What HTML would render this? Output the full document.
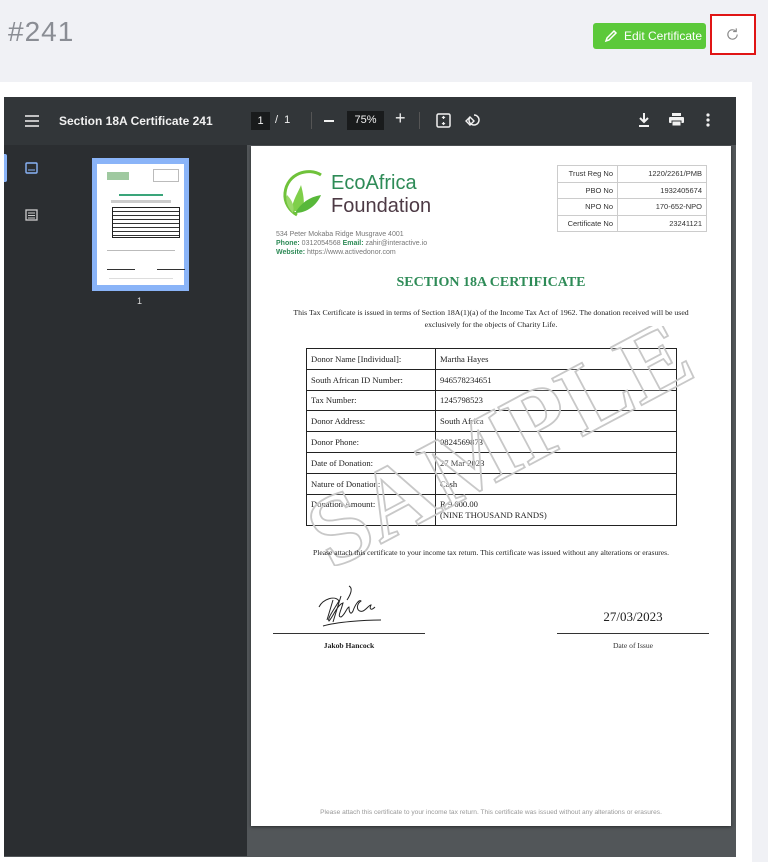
<!DOCTYPE html>
<html><head><meta charset="utf-8">
<style>
*{margin:0;padding:0;box-sizing:border-box}
body{width:768px;height:856px;overflow:hidden;background:#f0f1f5;font-family:"Liberation Sans",sans-serif;position:relative}
.abs{position:absolute}
.title{left:8px;top:16px;font-size:28px;color:#8a8d94;font-family:"Liberation Sans Narrow","Liberation Sans",sans-serif;letter-spacing:1px}
.btn{left:593px;top:23px;width:113px;height:26px;background:#5cc93a;border-radius:3px;color:#fff;font-size:12px;line-height:26px;padding-left:31px;font-family:"Liberation Sans Narrow","Liberation Sans",sans-serif}
.ref{left:710px;top:14px;width:46px;height:41px;border:2px solid #e01515;background:#fff}
.card{left:0;top:82px;width:752px;height:780px;background:#fff}
.viewer{left:4px;top:97px;width:732px;height:760px;background:#525659}
.tb{left:4px;top:97px;width:732px;height:48px;background:#323639;color:#f1f1f1}
.side{left:4px;top:145px;width:243px;height:711px;background:#2b2e31}
.page{left:251px;top:146px;width:480px;height:680px;background:#fff;box-shadow:0 1px 3px rgba(0,0,0,.5)}
.serif{font-family:"Liberation Serif",serif}
table{border-collapse:collapse}
.dt td{border:1px solid #222;font-size:8.6px;padding:0 4px;height:20.8px;vertical-align:middle;color:#222;font-family:"Liberation Serif",serif}
.it td{border:1px solid #ccc;font-size:7.5px;height:16.5px;padding:0 4px;color:#333;text-align:right}
</style></head><body>
<div class="abs title">#241</div>
<div class="abs btn">Edit Certificate</div>
<svg class="abs" style="left:604px;top:29px" width="14" height="14" viewBox="0 0 14 14"><path d="M2 12l1-3 7-7 2 2-7 7z" fill="none" stroke="#fff" stroke-width="1.5"/></svg>
<div class="abs ref"></div>
<svg class="abs" style="left:725px;top:27px" width="15" height="15" viewBox="0 0 16 16"><path d="M13 8a5 5 0 1 1-1.5-3.6" fill="none" stroke="#888" stroke-width="1.2"/><path d="M12 1.5v3.3H8.7" fill="none" stroke="#888" stroke-width="1.2"/></svg>
<div class="abs card"></div>
<div class="abs viewer"></div>
<div class="abs tb">
 <svg class="abs" style="left:21px;top:18px" width="14" height="12"><path d="M0 1h14M0 6h14M0 11h14" stroke="#f1f1f1" stroke-width="1.6"/></svg>
 <div class="abs" style="left:55px;top:17px;font-size:12px;font-weight:bold">Section 18A Certificate 241</div>
 <div class="abs" style="left:247px;top:15px;width:19px;height:18px;background:#191b1c;font-size:11px;text-align:center;line-height:18px">1</div>
 <div class="abs" style="left:271px;top:17px;font-size:11px">/&nbsp;&nbsp;1</div>
 <div class="abs" style="left:307px;top:15px;width:1px;height:17px;background:#555"></div>
 <div class="abs" style="left:320px;top:23px;width:10px;height:1.6px;background:#f1f1f1"></div>
 <div class="abs" style="left:343px;top:14px;width:37px;height:19px;background:#191b1c;font-size:11px;text-align:center;line-height:19px">75%</div>
 <div class="abs" style="left:391px;top:11px;font-size:18px">+</div>
 <div class="abs" style="left:415px;top:15px;width:1px;height:17px;background:#555"></div>
 <svg class="abs" style="left:432px;top:16px" width="15" height="15" viewBox="0 0 15 15"><rect x="1" y="1" width="13" height="13" rx="1.5" fill="none" stroke="#f1f1f1" stroke-width="1.5"/><path d="M7.5 4v2M7.5 9v2M6 5l1.5-1.5L9 5M6 10l1.5 1.5L9 10" stroke="#f1f1f1" fill="none"/></svg>
 <svg class="abs" style="left:461px;top:15px" width="16" height="16" viewBox="0 0 16 16"><path d="M9 3a5 5 0 1 1-4 2" fill="none" stroke="#f1f1f1" stroke-width="1.5"/><path d="M1 9l4-4 4 4-4 4z" fill="none" stroke="#f1f1f1" stroke-width="1.4"/></svg>
 <svg class="abs" style="left:634px;top:16px" width="12" height="14" viewBox="0 0 12 14"><path d="M6 0v8M2 5l4 4 4-4" stroke="#f1f1f1" stroke-width="2" fill="none"/><path d="M1 13h10" stroke="#f1f1f1" stroke-width="2"/></svg>
 <svg class="abs" style="left:665px;top:16px" width="15" height="14" viewBox="0 0 15 14"><rect x="3" y="0" width="9" height="3" fill="#f1f1f1"/><rect x="0" y="4" width="15" height="6" rx="1" fill="#f1f1f1"/><rect x="3" y="8" width="9" height="5" fill="#f1f1f1" stroke="#323639"/></svg>
 <svg class="abs" style="left:702px;top:16px" width="4" height="14"><circle cx="2" cy="2" r="1.6" fill="#f1f1f1"/><circle cx="2" cy="7" r="1.6" fill="#f1f1f1"/><circle cx="2" cy="12" r="1.6" fill="#f1f1f1"/></svg>
</div>
<div class="abs side">
 <div class="abs" style="left:0;top:9px;width:3px;height:28px;background:#8ab4f8;border-radius:0 2px 2px 0"></div>
 <svg class="abs" style="left:21px;top:17px" width="13" height="12"><rect x="1" y="1" width="11" height="10" rx="1" fill="none" stroke="#8ab4f8" stroke-width="1.4"/><path d="M3 8h7" stroke="#8ab4f8"/></svg>
 <svg class="abs" style="left:21px;top:64px" width="13" height="12"><rect x="1" y="1" width="11" height="10" fill="none" stroke="#ccc" stroke-width="1.3"/><path d="M3 4h7M3 6.5h7M3 9h7" stroke="#ccc"/></svg>
 <div class="abs" style="left:88px;top:13px;width:97px;height:133px;background:#8ab4f8"></div>
 <div class="abs" style="left:93px;top:19px;width:87px;height:121px;background:#fff">
   <div class="abs" style="left:10px;top:8px;width:22px;height:8px;background:#9fc9a0"></div>
   <div class="abs" style="left:56px;top:5px;width:26px;height:13px;border:1px solid #bbb"></div>
   <div class="abs" style="left:22px;top:30px;width:44px;height:2px;background:#3aa57a"></div>
   <div class="abs" style="left:14px;top:36px;width:60px;height:3px;background:#ccc"></div>
   <div class="abs" style="left:15px;top:43px;width:68px;height:31px;border:1px solid #222;background:repeating-linear-gradient(#fff 0 3px,#333 3px 4px)"></div>
   <div class="abs" style="left:10px;top:86px;width:68px;height:1px;background:#bbb"></div>
   <div class="abs" style="left:10px;top:105px;width:28px;height:1px;background:#333"></div>
   <div class="abs" style="left:60px;top:105px;width:28px;height:1px;background:#333"></div>
   <div class="abs" style="left:12px;top:114px;width:64px;height:1px;background:#ddd"></div>
 </div>
 <div class="abs" style="left:133px;top:151px;font-size:9px;color:#ddd">1</div>
</div>
<div class="abs page">
 <svg class="abs" style="left:30px;top:23px" width="45" height="48" viewBox="0 0 45 48"><path d="M40 6C28-2 6 4 4 24c-1 10 5 18 12 22" fill="none" stroke="#6fc23a" stroke-width="3"/><path d="M10 42c2-12 8-20 10-26 2 8 4 16 2 26z" fill="#7fcf4a"/><path d="M14 44c6-10 14-16 26-18-4 10-14 18-26 18z" fill="#58b83a"/><path d="M12 44C6 38 4 30 6 26c4 4 8 10 6 18z" fill="#9ad86a"/></svg>
 <div class="abs" style="left:80px;top:26px;font-size:20px;color:#2e8b57;line-height:22px">EcoAfrica</div>
 <div class="abs" style="left:80px;top:49px;font-size:20px;color:#4d3a45;line-height:22px">Foundation</div>
 <div class="abs" style="left:25px;top:84px;font-size:7px;color:#777;line-height:9px">534 Peter Mokaba Ridge Musgrave 4001<br><b style="color:#2e8b57">Phone:</b> 0312054568 <b style="color:#2e8b57">Email:</b> zahir@interactive.io<br><b style="color:#2e8b57">Website:</b> https://www.activedonor.com</div>
 <table class="it abs" style="left:306px;top:19px;width:150px">
  <tr><td style="width:60px">Trust Reg No</td><td>1220/2261/PMB</td></tr>
  <tr><td>PBO No</td><td>1932405674</td></tr>
  <tr><td>NPO No</td><td>170-652-NPO</td></tr>
  <tr><td>Certificate No</td><td>23241121</td></tr>
 </table>
 <div class="abs serif" style="left:0;width:480px;top:129px;text-align:center;font-size:14px;font-weight:bold;color:#2e8b57">SECTION 18A CERTIFICATE</div>
 <div class="abs serif" style="left:28px;width:424px;top:161px;text-align:center;font-size:7.8px;line-height:11.5px;color:#222">This Tax Certificate is issued in terms of Section 18A(1)(a) of the Income Tax Act of 1962. The donation received will be used exclusively for the objects of Charity Life.</div>
 <table class="dt abs" style="left:55px;top:202px;width:371px">
  <tr><td style="width:129px">Donor Name [Individual]:</td><td>Martha Hayes</td></tr>
  <tr><td>South African ID Number:</td><td>946578234651</td></tr>
  <tr><td>Tax Number:</td><td>1245798523</td></tr>
  <tr><td>Donor Address:</td><td>South Africa</td></tr>
  <tr><td>Donor Phone:</td><td>0824569873</td></tr>
  <tr><td>Date of Donation:</td><td>27 Mar 2023</td></tr>
  <tr><td>Nature of Donation:</td><td>Cash</td></tr>
  <tr><td style="height:31px;vertical-align:top;padding-top:4px">Donation Amount:</td><td style="vertical-align:top;padding-top:4px;line-height:11px">R 9 000.00<br>(NINE THOUSAND RANDS)</td></tr>
 </table>
 <svg class="abs" style="left:20px;top:180px" width="460" height="240"><text x="230" y="150" text-anchor="middle" transform="rotate(-28 230 120)" font-family="Liberation Serif" font-weight="bold" font-size="100" fill="#fff" fill-opacity=".2" stroke="#c8c8c8" stroke-width="1.8">SAMPLE</text></svg>
 <div class="abs serif" style="left:0;width:480px;top:402px;text-align:center;font-size:7.6px;color:#222">Please attach this certificate to your income tax return. This certificate was issued without any alterations or erasures.</div>
 <svg class="abs" style="left:60px;top:436px" width="80" height="50" viewBox="0 0 80 50"><path d="M8 25c4-8 16-12 20-6-6 10-12 18-10 20 4-4 8-16 14-18-2 8-6 14-2 14 4-2 6-10 8-10 0 6 2 8 4 4 2-6 6-12 8-10-6 4-4 12 2 10 4-2 6-6 8-6-2 4 0 6 4 2M12 44c14-4 40-6 58-6M38 4c4 2 2 8-2 14M22 18l-6 20M30 14l-8 26" fill="none" stroke="#222" stroke-width="1"/></svg>
 <div class="abs" style="left:22px;top:487px;width:152px;height:1px;background:#333"></div>
 <div class="abs" style="left:306px;top:487px;width:152px;height:1px;background:#333"></div>
 <div class="abs serif" style="left:22px;width:152px;top:495px;text-align:center;font-size:7.6px;font-weight:bold;color:#222">Jakob Hancock</div>
 <div class="abs serif" style="left:306px;width:152px;top:463px;text-align:center;font-size:13px;color:#222">27/03/2023</div>
 <div class="abs serif" style="left:306px;width:152px;top:495px;text-align:center;font-size:7.6px;color:#333">Date of Issue</div>
 <div class="abs" style="left:0;width:480px;top:663px;text-align:center;font-size:6.6px;color:#999">Please attach this certificate to your income tax return. This certificate was issued without any alterations or erasures.</div>
</div>
</body></html>
